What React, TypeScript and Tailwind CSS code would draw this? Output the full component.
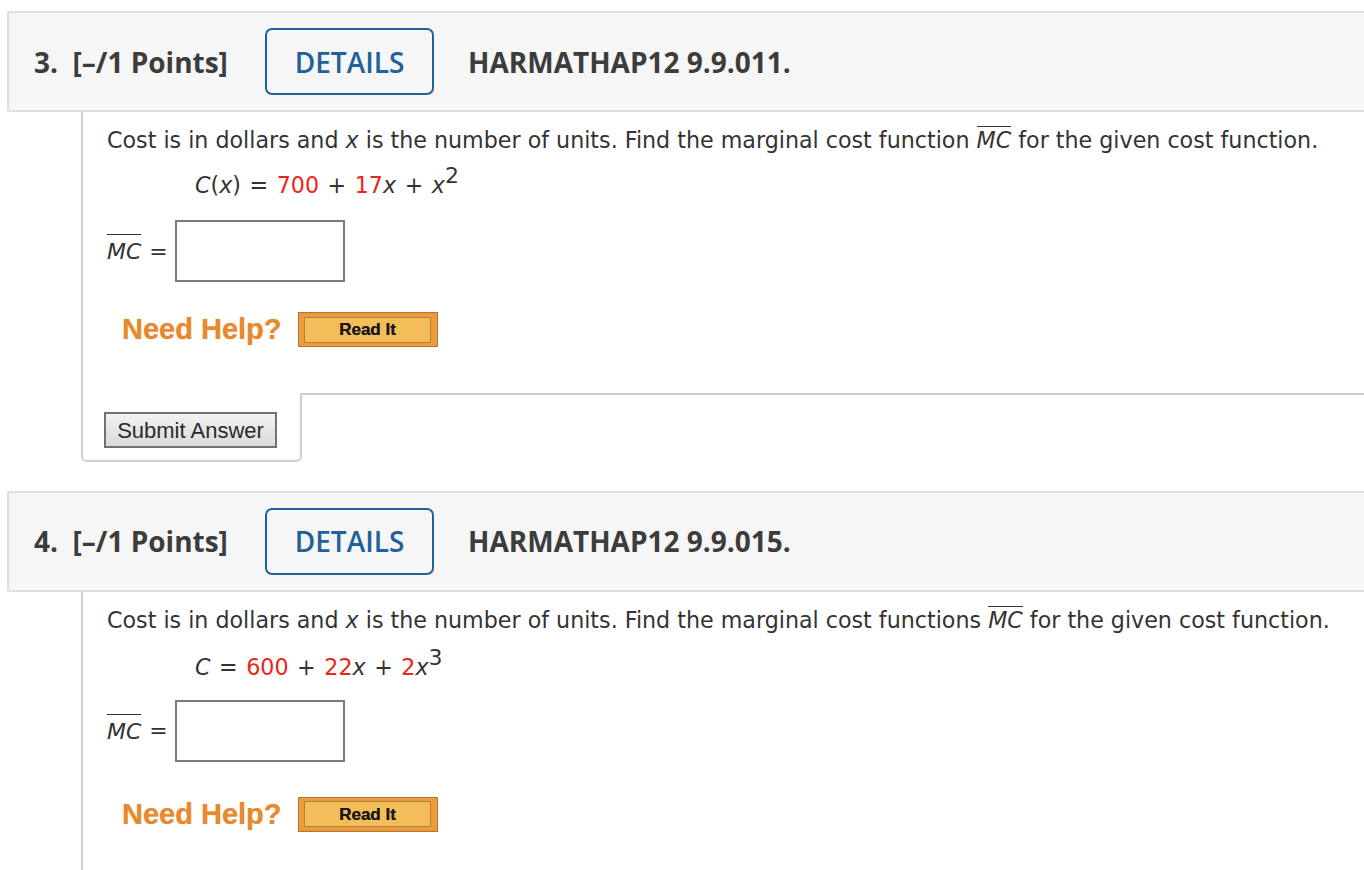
import React from 'react';

const body = { fontFamily: '"DejaVu Sans", Verdana, sans-serif' };
const head = { fontFamily: '"Open Sans", sans-serif' };
const arial = { fontFamily: '"Liberation Sans", Arial, sans-serif' };

function MC() {
    return <span className="italic border-t-[1.5px] border-[#333] pt-[0px]">MC</span>;
}

function Header({ num, code }: { num: string; code: string }) {
    return (
        <div
            className="flex items-center h-[101px] w-[1370px] bg-[#f6f6f6] border-2 border-[#dedede] rounded-[3px] text-[#3c3c3c]"
            style={head}
        >
            <div className="pl-[25px] text-[28px] font-bold whitespace-pre w-[256px]">{num}.  [–/1 Points]</div>
            <div className="h-[67px] w-[169px] border-[2.5px] border-[#22609a] rounded-[7px] flex items-center justify-center text-[28px] font-semibold text-[#22609a]">
                DETAILS
            </div>
            <div className="pl-[34px] text-[28px] font-bold">{code}</div>
        </div>
    );
}

function NeedHelp() {
    return (
        <div className="flex items-center pl-[15px]">
            <span className="text-[29px] font-bold text-[#e6892f] [text-shadow:0_0_1px_#f0b070]" style={arial}>
                Need Help?
            </span>
            <div className="ml-[16px] w-[140px] h-[35px] border border-[#b7762f] bg-[#ec9a3c] flex items-center justify-center">
                <div
                    className="w-[127px] h-[26px] border border-[#b3823e] bg-[#f3bd5a] flex items-center justify-center text-[17px] font-bold text-[#1a1a1a] [text-shadow:0_0_0.5px_#1a1a1a]"
                    style={arial}
                >
                    Read It
                </div>
            </div>
        </div>
    );
}

function AnswerRow() {
    return (
        <div className="flex items-center h-[62px] text-[22px] text-[#333]">
            <MC />
            <span className="ml-[8px]">=</span>
            <div className="ml-[7px] w-[170px] h-[62px] border-2 border-[#7b7b7b] bg-white" />
        </div>
    );
}

export default function App() {
    return (
        <div className="w-[1364px] h-[870px] overflow-hidden bg-white pl-[7px] pt-[11px]">
            {/* Question 3 */}
            <Header num="3" code="HARMATHAP12 9.9.011." />
            <div className="ml-[74px] border-l-2 border-[#cfcfcf] pl-[24px] pt-[13px] pb-[41px] text-[22.2px] text-[#333]" style={body}>
                <div className="h-[30px] leading-[30px] whitespace-nowrap">
                    Cost is in dollars and <span className="italic">x</span> is the number of units. Find the marginal cost function <MC /> for the given cost function.
                </div>
                <div className="pl-[88px] mt-[14px] h-[32px] leading-[32px] whitespace-pre [word-spacing:1.5px]">
                    <span className="italic">C</span>(<span className="italic">x</span>) = <span className="text-[#e8261c]">700</span> + <span className="text-[#e8261c]">17</span><span className="italic">x</span> + <span className="italic">x</span><sup className="text-[22px] top-[-10px]">2</sup>
                </div>
                <div className="mt-[19px]">
                    <AnswerRow />
                </div>
                <div className="mt-[26px]">
                    <NeedHelp />
                </div>
            </div>
            <div className="flex ml-[74px]">
                <div className="w-[221px] h-[69px] border-l-2 border-r-2 border-b-2 border-[#cfcfcf] rounded-b-[6px] pl-[21px] pt-[19px]">
                    <button
                        className="w-[173px] h-[36px] border-2 border-[#727272] bg-gradient-to-b from-[#f2f2f2] to-[#dadada] text-[22px] text-[#2a2a2a]"
                        style={arial}
                    >
                        Submit Answer
                    </button>
                </div>
                <div className="flex-1 border-t-2 border-[#cfcfcf]" />
            </div>

            {/* Question 4 */}
            <div className="mt-[29px]">
                <Header num="4" code="HARMATHAP12 9.9.015." />
            </div>
            <div className="ml-[74px] border-l-2 border-[#cfcfcf] pl-[24px] pt-[13px] pb-[60px] text-[22.2px] text-[#333]" style={body}>
                <div className="h-[30px] leading-[30px] whitespace-nowrap">
                    Cost is in dollars and <span className="italic">x</span> is the number of units. Find the marginal cost functions <MC /> for the given cost function.
                </div>
                <div className="pl-[88px] mt-[16px] h-[32px] leading-[32px] whitespace-pre [word-spacing:1.5px]">
                    <span className="italic">C</span> = <span className="text-[#e8261c]">600</span> + <span className="text-[#e8261c]">22</span><span className="italic">x</span> + <span className="text-[#e8261c]">2</span><span className="italic">x</span><sup className="text-[22px] top-[-10px]">3</sup>
                </div>
                <div className="mt-[17px]">
                    <AnswerRow />
                </div>
                <div className="mt-[31px]">
                    <NeedHelp />
                </div>
            </div>
        </div>
    );
}
